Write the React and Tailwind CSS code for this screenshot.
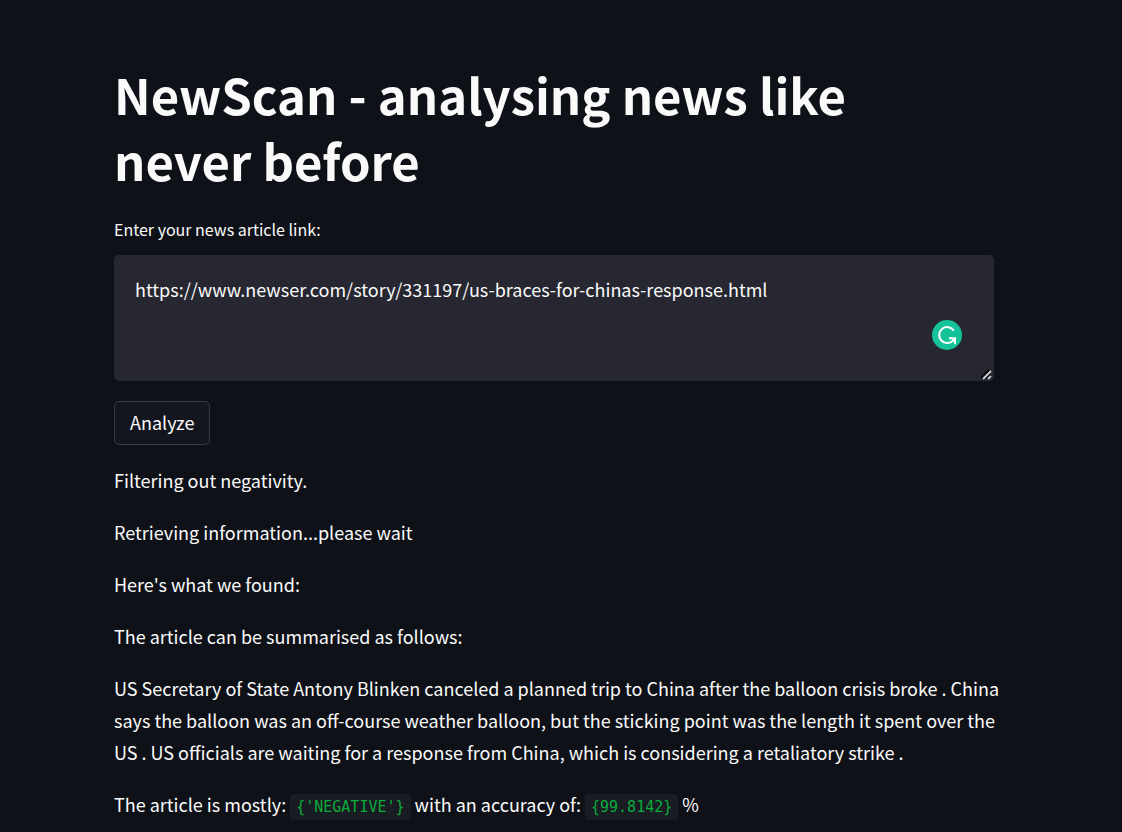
import { useState } from "react";

const statusLines = [
  "Filtering out negativity.",
  "Retrieving information...please wait",
  "Here's what we found:",
  "The article can be summarised as follows:",
  "US Secretary of State Antony Blinken canceled a planned trip to China after the balloon crisis broke . China says the balloon was an off-course weather balloon, but the sticking point was the length it spent over the US . US officials are waiting for a response from China, which is considering a retaliatory strike .",
];

function Code({ children }) {
  return (
    <code className="rounded bg-[#1a1c24] px-[6px] py-1 font-['DejaVu_Sans_Mono',monospace] text-[15px] text-[#09ab3b]">
      {children}
    </code>
  );
}

function GrammarBadge() {
  return (
    <svg
      viewBox="0 0 30 30"
      aria-hidden="true"
      className="absolute right-8 bottom-[31px] size-[30px]"
    >
      <circle cx="15" cy="15" r="15" fill="#15c39a" />
      <path
        d="M21.8 10.6A8 8 0 1 0 20.6 21L22.4 18.6M17 18.2h6v6"
        fill="none"
        stroke="#fff"
        strokeWidth="2"
      />
    </svg>
  );
}

function ResizeGrip() {
  return (
    <svg
      viewBox="0 0 12 12"
      aria-hidden="true"
      className="pointer-events-none absolute right-[2px] bottom-[1px] size-3"
    >
      <path d="M1.500 10L9.500 2M6.500 10.500L10.500 6.500" stroke="#0b0c10" strokeWidth="3" />
      <path d="M3 11L11 3M8 11L11 8" stroke="#c8c8cc" strokeWidth="2" />
    </svg>
  );
}

export default function App() {
  const [link, setLink] = useState(
    "https://www.newser.com/story/331197/us-braces-for-chinas-response.html"
  );

  return (
    <div className="min-h-screen bg-[#0e1117] font-['Noto_Sans_CJK_SC',sans-serif] text-[#fafafa]">
      <main className="mr-32 ml-[114px] pt-[61px] pb-3">
        <h1 className="text-[49px] leading-[66px] font-bold">
          NewScan - analysing news like never before
        </h1>

        <label htmlFor="link" className="mt-6 block text-[16px] leading-6">
          Enter your news article link:
        </label>
        <div className="relative mt-[14px]">
          <textarea
            id="link"
            value={link}
            onChange={(e) => setLink(e.target.value)}
            className="block h-[126px] w-full resize-y rounded-[5px] bg-[#262730] px-[21px] py-[19px] text-[18px] leading-[30px] outline-none [&::-webkit-resizer]:hidden"
          />
          <GrammarBadge />
          <ResizeGrip />
        </div>

        <button
          type="button"
          className="mt-5 h-11 rounded-[5px] border border-[#3b3d45] bg-[#13161f] px-[15px] pb-[2px] text-[18px]"
        >
          Analyze
        </button>

        {/* a little wider than the form so long summaries don't break early */}
        <div className="mt-[19px] -mr-2 space-y-5 text-[18px] leading-8">
          {statusLines.map((line) => (
            <p key={line}>{line}</p>
          ))}
          <p>
            The article is mostly: <Code>{"{'NEGATIVE'}"}</Code> with an accuracy
            of: <Code>{"{99.8142}"}</Code> %
          </p>
        </div>
      </main>
    </div>
  );
}
